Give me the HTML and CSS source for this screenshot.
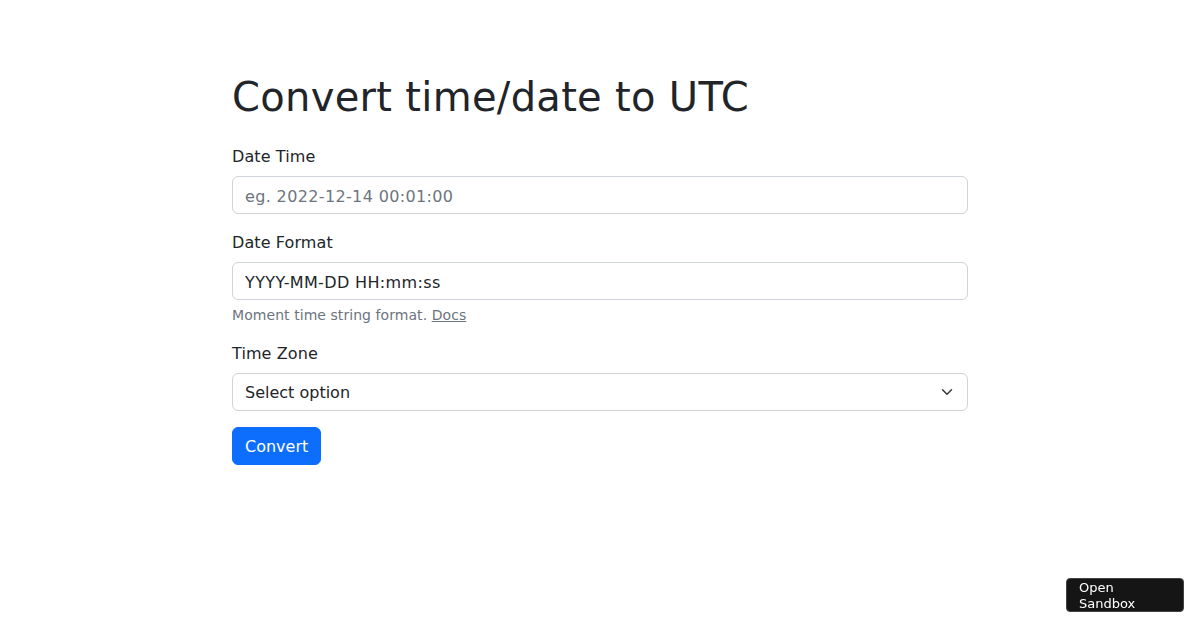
FILE: index.html
```html
<!DOCTYPE html>
<html lang="en">
<head>
<meta charset="utf-8">
<title>Convert time/date to UTC</title>
<link rel="stylesheet" href="styles.css">
</head>
<body>
<main class="container">
  <h1 class="title">Convert time/date to UTC</h1>
  <form class="form">
    <div class="field">
      <label class="label" for="dt">Date Time</label>
      <input class="control control-text" id="dt" type="text" placeholder="eg. 2022-12-14 00:01:00">
    </div>
    <div class="field">
      <label class="label" for="fmt">Date Format</label>
      <input class="control control-text" id="fmt" type="text" value="YYYY-MM-DD HH:mm:ss">
      <div class="help">Moment time string format. <a class="help-link" href="#">Docs</a></div>
    </div>
    <div class="field">
      <label class="label" for="tz">Time Zone</label>
      <select class="control select" id="tz">
        <option>Select option</option>
      </select>
    </div>
    <div><button class="btn" type="button">Convert</button></div>
  </form>
</main>
<a class="sandbox" href="#">Open<br>Sandbox</a>
</body>
</html>
```
FILE: styles.css
```css
* { box-sizing: border-box; }
html, body { margin: 0; padding: 0; background: #fff; }
body {
  font-family: "DejaVu Sans", sans-serif;
  font-size: 16px;
  line-height: 1.5;
  color: #212529;
}
.container {
  width: 736px;
  margin: 0 auto;
  padding-top: 72px;
}
.title {
  font-size: 40px;
  font-weight: 500;
  line-height: 1.2;
  margin: 0 0 8px 0;
  padding-top: 1px;
  height: 48px;
  letter-spacing: 0.3px;
}
.form { margin: 0; }
.field { margin-bottom: 16px; }
.field:first-child { margin-top: 24px; }
.label {
  display: inline-block;
  margin-bottom: 8px;
  padding-top: 1px;
  height: 24px;
  letter-spacing: 0.1px;
}
.control {
  display: block;
  width: 100%;
  height: 38px;
  padding: 6px 12px;
  font-family: inherit;
  font-size: 16px;
  line-height: 1.5;
  color: #212529;
  background: #fff;
  border: 1px solid #ced4da;
  border-radius: 6px;
  appearance: none;
  outline: none;
}
.control-text { letter-spacing: 0.36px; padding-top: 7px; padding-bottom: 5px; }
.control::placeholder { color: #6c757d; opacity: 1; }
.select {
  padding-right: 36px;
  padding-top: 7px;
  padding-bottom: 5px;
  background-image: url("data:image/svg+xml,%3csvg xmlns='http://www.w3.org/2000/svg' viewBox='0 0 16 16'%3e%3cpath fill='none' stroke='%23343a40' stroke-linecap='round' stroke-linejoin='round' stroke-width='2' d='m2 5 6 6 6-6'/%3e%3c/svg%3e");
  background-repeat: no-repeat;
  background-position: right 12px center;
  background-size: 16px 12px;
}
.help {
  margin-top: 4px;
  padding-top: 1px;
  height: 21px;
  font-size: 14px;
  line-height: 1.5;
  color: #6c757d;
  letter-spacing: 0.06px;
}
.help-link { color: inherit; text-decoration: underline; }
.btn {
  font-family: inherit;
  font-size: 16px;
  line-height: 1.5;
  height: 38px;
  padding: 7px 12px 5px;
  color: #fff;
  background: #0d6efd;
  border: 1px solid #0d6efd;
  border-radius: 6px;
  cursor: pointer;
}
.sandbox {
  position: fixed;
  right: 16px;
  bottom: 18px;
  width: 118px;
  height: 34px;
  padding: 1px 12px 0 12px;
  background: #151515;
  color: #fff;
  border-radius: 4px;
  font-size: 13px;
  line-height: 16px;
  text-decoration: none;
  border: 1px solid #444;
}
```
